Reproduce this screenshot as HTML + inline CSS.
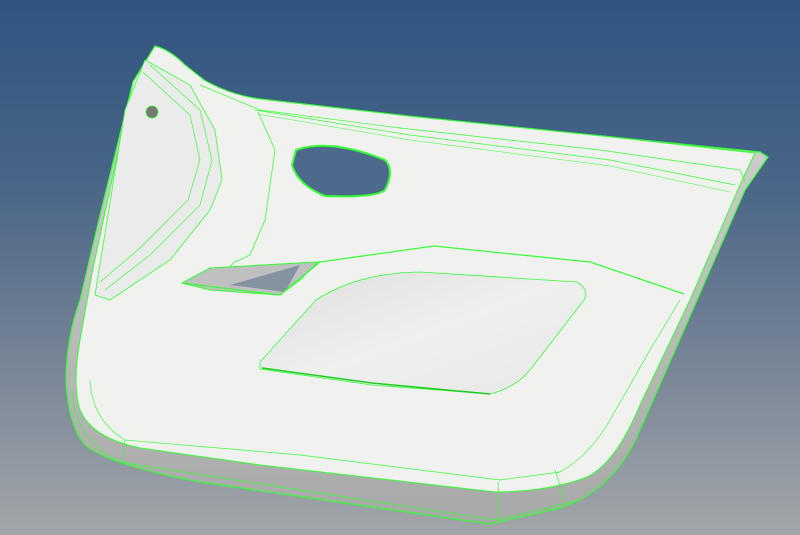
<!DOCTYPE html>
<html><head><style>html,body{margin:0;padding:0;width:800px;height:535px;overflow:hidden}
body{background:linear-gradient(#2f5580 0%,#4a6688 35%,#7a8797 70%,#a3a6aa 100%)}</style></head>
<body>
<svg width="800" height="535" viewBox="0 0 800 535" xmlns="http://www.w3.org/2000/svg">
<defs>
<linearGradient id="pk" x1="0" y1="0" x2="1" y2="1"><stop offset="0" stop-color="#dedede"/><stop offset="0.5" stop-color="#efefef"/><stop offset="1" stop-color="#e8e8e8"/></linearGradient>
<linearGradient id="bt" x1="0" y1="0" x2="0" y2="1"><stop offset="0" stop-color="#d6d6d6"/><stop offset="1" stop-color="#a8a8a8"/></linearGradient>
</defs>
<!-- outer shell / bottom lip -->
<path d="M155,46 Q170,50 185,65 L204,80 Q230,95 260,99 L408,116 L612,137 L760,152 L768,157 L745,190 L684,330 L640,430 Q615,490 560,508 L490,524 L200,482 Q110,465 85,445 Q68,425 66,380 Q66,340 80,300 L100,215 L133,82 Z" fill="url(#bt)" stroke="#3f3" stroke-width="1.2"/>
<!-- main face -->
<path d="M155,46 Q170,50 185,65 L204,80 Q230,95 260,99 L408,116 L612,137 L755,153 L740,185 L690,300 L640,405 Q615,465 585,478 Q545,492 495,492 L260,465 L140,448 Q92,438 80,410 Q72,385 80,340 L92,273 L133,82 Z" fill="#f1f1f0" stroke="#3f3" stroke-width="1"/>
<!-- left window frame -->
<path d="M145,60 L190,85 L215,130 L222,180 L210,210 L170,260 L110,300 L95,295 L125,110 Z" fill="#ebebeb" stroke="#3f3" stroke-width="0.8"/>
<path d="M150,65 L200,110 L212,160 L200,205 L150,255 L105,290" fill="none" stroke="#3f3" stroke-width="0.7"/>
<path d="M143,72 L190,115 L200,160 L188,200 L140,248 L100,282" fill="none" stroke="#3f3" stroke-width="0.7"/>
<circle cx="152" cy="112" r="6" fill="#777" stroke="#3f3" stroke-width="0.8"/>
<!-- top rails -->
<path d="M200,85 L260,110 L400,128 L600,150 L740,170 L745,182" fill="none" stroke="#3f3" stroke-width="0.7"/>
<path d="M255,110 L410,135 L610,160 L735,185" fill="none" stroke="#3f3" stroke-width="0.7"/>
<path d="M258,114 L410,140 L610,166 L730,192" fill="none" stroke="#3f3" stroke-width="0.5"/>
<path d="M258,112 L275,150 L265,220 L250,255 L235,262 L215,278" fill="none" stroke="#3f3" stroke-width="0.8"/>
<!-- handle hole -->
<path d="M296,150 Q330,138 385,160 Q395,170 385,190 Q375,198 325,196 Q298,185 292,165 Z" fill="#4d6a8c" stroke="#3f3" stroke-width="2"/>
<!-- slot -->
<path d="M182,283 L210,268 L318,262 L300,280 L280,295 L210,290 Z" fill="#c0c0c0" stroke="#3f3" stroke-width="1"/>
<path d="M230,285 L300,265 L285,292 Z" fill="#8592a0"/>
<!-- armrest top line -->
<path d="M182,283 L280,295 L320,262 L434,246 L590,262 L684,294" fill="none" stroke="#3f3" stroke-width="1.2"/>
<!-- pocket -->
<path d="M260,362 L316,300 Q357,273 420,272 L577,282 Q590,290 584,300 L530,370 Q515,388 490,394 L372,385 L260,369 Z" fill="url(#pk)" stroke="#3f3" stroke-width="0.8"/>
<path d="M262,368 L372,383 L490,394" fill="none" stroke="#2c2" stroke-width="1.5"/>
<!-- lower face lines -->
<path d="M90,380 Q92,420 125,440 L300,455 L500,480 L560,472 Q590,455 610,420 L650,350 L680,300" fill="none" stroke="#3f3" stroke-width="0.7"/>
<path d="M72,390 Q75,440 120,462 L300,490 L495,520 L580,500" fill="none" stroke="#3f3" stroke-width="0.7"/>
<path d="M125,440 L122,465 M498,482 L500,520 M555,470 L565,500" fill="none" stroke="#3f3" stroke-width="0.7"/>
</svg>
</body></html>
